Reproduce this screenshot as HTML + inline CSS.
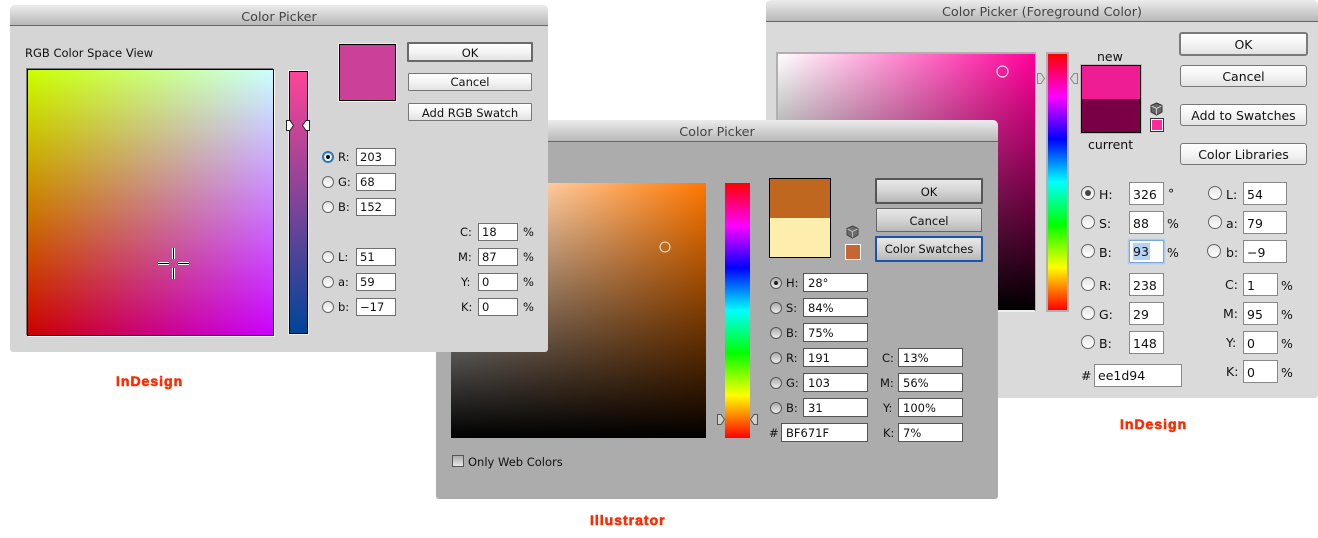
<!DOCTYPE html>
<html><head><meta charset="utf-8"><style>
html,body{margin:0;padding:0;background:#fff}
#p{position:relative;width:1318px;height:538px;overflow:hidden;background:#fff;font-family:"DejaVu Sans","Liberation Sans",sans-serif;font-size:11.5px;color:#111}
#p div,#p svg{position:absolute;box-sizing:border-box}
.d{border-radius:5px 5px 3px 3px;overflow:hidden}
.tb{left:0;top:0;right:0;height:22px;background:linear-gradient(#ececec,#b8b8b8);border-bottom:1px solid #666;text-align:center;color:#444;font-size:12.8px;line-height:26px}
.f{background:#fff;border:1px solid #6f6f6f;height:18px;width:40px;padding-left:3px;line-height:17px;white-space:nowrap}
.g{height:19px;width:65px;padding-left:4px;line-height:18px;border:1px solid #555;background:#fff;white-space:nowrap}
.h{height:23px;width:35px;padding-left:3px;font-size:12.5px;line-height:24px;border:1px solid #888;background:#fff;white-space:nowrap}
.r{width:12px;height:12px;border-radius:50%;border:1px solid #666;background:linear-gradient(#e4e4e4,#fff)}
.r2{background:linear-gradient(#aaa,#eee);border-color:#555}
.t{white-space:nowrap;line-height:16px}
.t3{font-size:12.5px;margin-top:1px}
.b{background:linear-gradient(#fff,#f4f4f4 50%,#e2e2e2);border:1px solid #777;text-align:center;white-space:nowrap;border-radius:1px}
.rd{font-weight:bold;color:#ff2a00;font-family:"Liberation Sans",sans-serif;font-size:14px;letter-spacing:1px;-webkit-text-stroke:.6px #ff2a00;white-space:nowrap;line-height:16px}
.hue{background:linear-gradient(#f00,#f0f 16.7%,#00f 33.3%,#0ff 50%,#0f0 66.7%,#ff0 83.3%,#f00)}
</style></head><body><div id="p">

<!-- Dialog 3 -->
<div class="d" style="left:766px;top:0;width:552px;height:398px;background:#dadada"><div class="tb">Color Picker (Foreground Color)</div></div>
<div style="left:776px;top:52px;width:260px;height:260px;border:2px solid #b0b0b0;border-bottom-color:#f0f0f0;border-right-color:#b0b0b0"></div>
<div style="left:778px;top:54px;width:257px;height:256px;background:linear-gradient(transparent,#000),linear-gradient(90deg,#fff,#f09)"></div>
<svg style="left:995px;top:64px" width="15" height="15"><circle cx="7.500" cy="7.500" r="5.500" fill="none" stroke="#f5d5e8" stroke-width="1.200"/></svg>
<div style="left:1046px;top:52px;width:23px;height:260px;background:#b0b0b0"></div>
<div class="hue" style="left:1048px;top:54px;width:19px;height:256px"></div>
<svg style="left:1036px;top:72px" width="10" height="13"><path d="M1.500 1.500H5L8.500 6.500L5 11.500H1.500Z" fill="#d8d8d8" stroke="#888"/></svg>
<svg style="left:1069px;top:72px" width="10" height="13"><path d="M8.500 1.500H5L1.500 6.500L5 11.500H8.500Z" fill="#d8d8d8" stroke="#888"/></svg>
<div class="t t3" style="left:1097px;top:48px">new</div>
<div style="left:1081px;top:65px;width:60px;height:68px;border:1px solid #000;background:linear-gradient(#ee1d94 50%,#7a0045 50%);box-shadow:0 0 0 1px #bbb"></div>
<div class="t t3" style="left:1088px;top:136px">current</div>
<svg style="left:1150px;top:102px" width="13" height="14"><path d="M6.500 1L12 3.500V10L6.500 13L1 10V3.500Z" fill="#666" stroke="#333"/><path d="M1.500 4L6.500 6.500L11.500 4M6.500 6.500V12.500" stroke="#ccc" fill="none"/></svg>
<div style="left:1150px;top:118px;width:14px;height:14px;background:#ff2b9c;border:1px solid #333;box-shadow:inset 0 0 0 1px #fff"></div>
<div class="b" style="font-size:12.5px;left:1179px;top:32px;width:129px;height:24px;border:2px solid #7a7a7a;line-height:21px;border-radius:3px">OK</div>
<div class="b" style="font-size:12.5px;left:1180px;top:65px;width:127px;height:22px;line-height:21px;border-radius:3px">Cancel</div>
<div class="b" style="font-size:12.5px;left:1180px;top:104px;width:127px;height:22px;line-height:21px;border-radius:3px">Add to Swatches</div>
<div class="b" style="font-size:12.5px;left:1180px;top:143px;width:127px;height:22px;line-height:21px;border-radius:3px">Color Libraries</div>

<div class="r" style="left:1081px;top:186px;width:14px;height:14px"></div><div style="left:1085px;top:190px;width:6px;height:6px;border-radius:50%;background:#444"></div>
<div class="r" style="left:1081px;top:215px;width:14px;height:14px"></div>
<div class="r" style="left:1081px;top:244px;width:14px;height:14px"></div>
<div class="r" style="left:1081px;top:277px;width:14px;height:14px"></div>
<div class="r" style="left:1081px;top:306px;width:14px;height:14px"></div>
<div class="r" style="left:1081px;top:335px;width:14px;height:14px"></div>
<div class="r" style="left:1208px;top:186px;width:14px;height:14px"></div>
<div class="r" style="left:1208px;top:215px;width:14px;height:14px"></div>
<div class="r" style="left:1207px;top:244px;width:14px;height:14px"></div>
<div class="t t3" style="left:1099px;top:186px">H:</div>
<div class="t t3" style="left:1099px;top:215px">S:</div>
<div class="t t3" style="left:1099px;top:244px">B:</div>
<div class="t t3" style="left:1099px;top:277px">R:</div>
<div class="t t3" style="left:1099px;top:306px">G:</div>
<div class="t t3" style="left:1099px;top:335px">B:</div>
<div class="h" style="left:1129px;top:182px">326</div>
<div class="h" style="left:1129px;top:211px">88</div>
<div class="h" style="left:1129px;top:240px;border:1px solid #7aa7e0;box-shadow:0 0 1px 1px #a8c8f0"></div>
<div style="left:1133px;top:243px;width:17px;height:17px;background:#b5d3f5"></div>
<div class="t t3" style="left:1133px;top:243px">93</div>
<div class="h" style="left:1129px;top:273px">238</div>
<div class="h" style="left:1129px;top:302px">29</div>
<div class="h" style="left:1129px;top:331px">148</div>
<div class="t t3" style="left:1168px;top:185px">°</div>
<div class="t t3" style="left:1167px;top:215px">%</div>
<div class="t t3" style="left:1167px;top:244px">%</div>
<div class="t t3" style="left:1081px;top:367px">#</div>
<div class="h" style="left:1094px;top:364px;width:88px;line-height:22px">ee1d94</div>
<div class="t t3" style="left:1226px;top:186px">L:</div>
<div class="t t3" style="left:1226px;top:215px">a:</div>
<div class="t t3" style="left:1226px;top:244px">b:</div>
<div class="h" style="left:1243px;top:182px;width:44px">54</div>
<div class="h" style="left:1243px;top:211px;width:44px">79</div>
<div class="h" style="left:1243px;top:240px;width:44px">−9</div>
<div class="t t3" style="left:1225px;top:276px">C:</div>
<div class="t t3" style="left:1223px;top:305px">M:</div>
<div class="t t3" style="left:1226px;top:334px">Y:</div>
<div class="t t3" style="left:1226px;top:363px">K:</div>
<div class="h" style="left:1243px;top:273px">1</div>
<div class="h" style="left:1243px;top:302px">95</div>
<div class="h" style="left:1243px;top:331px">0</div>
<div class="h" style="left:1243px;top:360px">0</div>
<div class="t t3" style="left:1281px;top:277px">%</div>
<div class="t t3" style="left:1281px;top:306px">%</div>
<div class="t t3" style="left:1281px;top:335px">%</div>
<div class="t t3" style="left:1281px;top:364px">%</div>

<!-- Dialog 2 -->
<div class="d" style="left:436px;top:120px;width:562px;height:379px;background:#acacac"><div class="tb">Color Picker</div></div>
<div style="left:451px;top:183px;width:255px;height:255px;background:linear-gradient(transparent,#000),linear-gradient(90deg,#fff,#ff7700)"></div>
<svg style="left:658px;top:240px" width="14" height="14"><circle cx="7" cy="7" r="5" fill="none" stroke="#f0e0d0" stroke-width="1.100"/></svg>
<div class="hue" style="left:725px;top:183px;width:25px;height:255px"></div>
<svg style="left:716px;top:413px" width="10" height="13"><path d="M1.500 1.500H5L8.500 6.500L5 11.500H1.500Z" fill="#d0d0d0" stroke="#555"/></svg>
<svg style="left:749px;top:413px" width="10" height="13"><path d="M8.500 1.500H5L1.500 6.500L5 11.500H8.500Z" fill="#d0d0d0" stroke="#555"/></svg>
<div style="left:769px;top:178px;width:62px;height:80px;border:1px solid #000;background:linear-gradient(#bf671f 50%,#feeeae 50%)"></div>
<svg style="left:846px;top:225px" width="13" height="14"><path d="M6.500 1L12 3.500V10L6.500 13L1 10V3.500Z" fill="#6a6a6a" stroke="#444"/><path d="M1.500 4L6.500 6.500L11.500 4M6.500 6.500V12.500" stroke="#bbb" fill="none"/></svg>
<div style="left:845px;top:244px;width:16px;height:16px;background:#c76634;border:1px solid #fff"></div>
<div class="b" style="left:875px;top:178px;width:108px;height:26px;border:2px solid #555;line-height:24px;background:linear-gradient(#e8e8e8,#d4d4d4 50%,#b8b8b8)">OK</div>
<div class="b" style="left:876px;top:208px;width:106px;height:24px;border-color:#666;line-height:24px;background:linear-gradient(#e8e8e8,#d4d4d4 50%,#b8b8b8)">Cancel</div>
<div class="b" style="left:875px;top:236px;width:108px;height:26px;border:2px solid #1a52b0;line-height:22px;background:linear-gradient(#e8e8e8,#d4d4d4 50%,#b8b8b8)">Color Swatches</div>

<div class="r r2" style="left:770px;top:277px"></div><div style="left:774px;top:281px;width:4px;height:4px;border-radius:50%;background:#222"></div>
<div class="r r2" style="left:770px;top:302px"></div>
<div class="r r2" style="left:770px;top:327px"></div>
<div class="r r2" style="left:770px;top:352px"></div>
<div class="r r2" style="left:770px;top:377px"></div>
<div class="r r2" style="left:770px;top:402px"></div>
<div class="t" style="left:786px;top:275px">H:</div>
<div class="t" style="left:786px;top:300px">S:</div>
<div class="t" style="left:786px;top:325px">B:</div>
<div class="t" style="left:786px;top:350px">R:</div>
<div class="t" style="left:786px;top:375px">G:</div>
<div class="t" style="left:786px;top:400px">B:</div>
<div class="t" style="left:769px;top:425px">#</div>
<div class="g" style="left:803px;top:273px">28°</div>
<div class="g" style="left:803px;top:298px">84%</div>
<div class="g" style="left:803px;top:323px">75%</div>
<div class="g" style="left:803px;top:348px">191</div>
<div class="g" style="left:803px;top:373px">103</div>
<div class="g" style="left:803px;top:398px">31</div>
<div class="g" style="left:781px;top:423px;width:87px">BF671F</div>
<div class="t" style="left:882px;top:350px">C:</div>
<div class="t" style="left:880px;top:375px">M:</div>
<div class="t" style="left:883px;top:400px">Y:</div>
<div class="t" style="left:883px;top:425px">K:</div>
<div class="g" style="left:898px;top:348px">13%</div>
<div class="g" style="left:898px;top:373px">56%</div>
<div class="g" style="left:898px;top:398px">100%</div>
<div class="g" style="left:898px;top:423px">7%</div>
<div style="left:452px;top:455px;width:12px;height:12px;border:1px solid #555;background:linear-gradient(#aaa,#e8e8e8)"></div>
<div class="t" style="left:468px;top:454px">Only Web Colors</div>

<!-- Dialog 1 -->
<div class="d" style="left:10px;top:5px;width:538px;height:347px;background:#d5d5d5"><div class="tb" style="height:21px;line-height:25px">Color Picker</div></div>
<div class="t" style="left:25px;top:45px;color:#111">RGB Color Space View</div>
<div style="left:27px;top:69px;width:247px;height:267px;border:1px solid #000;box-shadow:1px 1px 0 #fff,-1px -1px 0 #777;background-color:rgb(203,0,0);background-image:linear-gradient(90deg,#000,#00f),linear-gradient(#0f0,#000);background-blend-mode:screen"></div>
<div style="left:172px;top:248px;width:3px;height:11px;background:#000;border:solid #fff;border-width:0 1px"></div>
<div style="left:172px;top:268px;width:3px;height:11px;background:#000;border:solid #fff;border-width:0 1px"></div>
<div style="left:158px;top:262px;width:11px;height:3px;background:#000;border:solid #fff;border-width:1px 0"></div>
<div style="left:178px;top:262px;width:11px;height:3px;background:#000;border:solid #fff;border-width:1px 0"></div>
<div style="left:289px;top:71px;width:19px;height:263px;border:1px solid #000;box-shadow:0 0 0 1px #eee;background:linear-gradient(rgb(255,68,152),rgb(0,68,152))"></div>
<svg style="left:285px;top:119px" width="10" height="13"><path d="M1.500 1.500H5L8.500 6.500L5 11.500H1.500Z" fill="#fff" stroke="#222"/></svg>
<svg style="left:301px;top:119px" width="10" height="13"><path d="M8.500 1.500H5L1.500 6.500L5 11.500H8.500Z" fill="#fff" stroke="#222"/></svg>
<div style="left:339px;top:44px;width:57px;height:57px;border:1px solid #000;box-shadow:0 0 0 1px #eee;background:#cb4098"></div>
<div class="b" style="left:407px;top:42px;width:126px;height:20px;border:2px solid #6a6a6a;line-height:18px">OK</div>
<div class="b" style="left:408px;top:73px;width:124px;height:18px;line-height:16px">Cancel</div>
<div class="b" style="left:408px;top:103px;width:124px;height:18px;line-height:18px">Add RGB Swatch</div>

<div class="r" style="left:322px;top:151px;border:2px solid #2a78b8"></div><div style="left:326px;top:155px;width:4px;height:4px;border-radius:50%;background:#111"></div>
<div class="r" style="left:322px;top:176px"></div>
<div class="r" style="left:322px;top:201px"></div>
<div class="r" style="left:322px;top:251px"></div>
<div class="r" style="left:322px;top:276px"></div>
<div class="r" style="left:322px;top:301px"></div>
<div class="t" style="left:338px;top:149px">R:</div>
<div class="t" style="left:338px;top:174px">G:</div>
<div class="t" style="left:338px;top:199px">B:</div>
<div class="t" style="left:338px;top:249px">L:</div>
<div class="t" style="left:338px;top:274px">a:</div>
<div class="t" style="left:338px;top:299px">b:</div>
<div class="f" style="left:356px;top:148px">203</div>
<div class="f" style="left:356px;top:173px">68</div>
<div class="f" style="left:356px;top:198px">152</div>
<div class="f" style="left:356px;top:248px">51</div>
<div class="f" style="left:356px;top:273px">59</div>
<div class="f" style="left:356px;top:298px">−17</div>
<div class="t" style="left:460px;top:224px">C:</div>
<div class="t" style="left:458px;top:249px">M:</div>
<div class="t" style="left:461px;top:274px">Y:</div>
<div class="t" style="left:461px;top:299px">K:</div>
<div class="f" style="left:478px;top:223px">18</div>
<div class="f" style="left:478px;top:248px">87</div>
<div class="f" style="left:478px;top:273px">0</div>
<div class="f" style="left:478px;top:298px">0</div>
<div class="t" style="left:523px;top:224px">%</div>
<div class="t" style="left:523px;top:249px">%</div>
<div class="t" style="left:523px;top:274px">%</div>
<div class="t" style="left:523px;top:299px">%</div>

<div class="rd" style="left:116px;top:373px">InDesign</div>
<div class="rd" style="left:590px;top:512px">Illustrator</div>
<div class="rd" style="left:1120px;top:416px">InDesign</div>
</div></body></html>
